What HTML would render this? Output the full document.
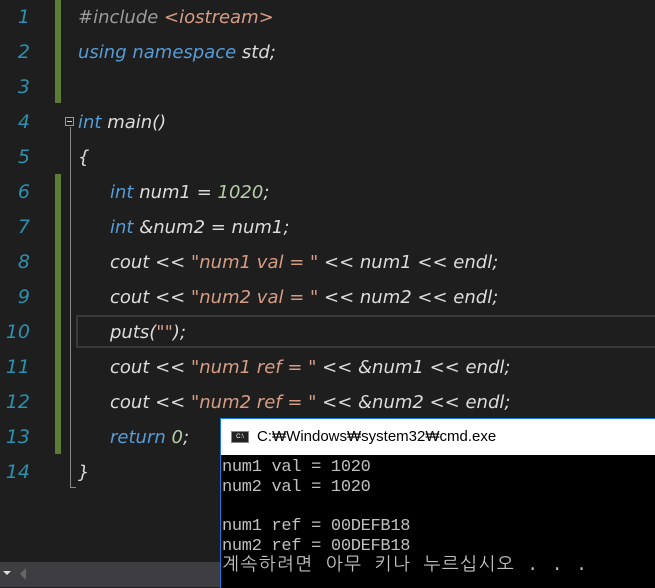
<!DOCTYPE html><html><head><meta charset="utf-8"><style>
body{margin:0;width:655px;height:587px;background:#1e1e1e;position:relative;overflow:hidden;font-family:"DejaVu Sans",sans-serif}
.ln{position:absolute;left:0;width:30px;text-align:right;color:#2b91af;font-size:19px;font-style:italic}
.c{position:absolute;left:78px;color:#dcdcdc;font-size:18px;white-space:pre;font-style:italic}
.i{padding-left:32px}
.k{color:#569cd6}.s{color:#d69d85}.n{color:#b5cea8}.p{color:#9b9b9b}
.g{position:absolute;left:55px;width:6px;background:#5a7c34}
.con{position:absolute;left:220px;top:418px;width:435px;height:169px;background:#000;border-left:1px solid #1a7ad8;border-top:1px solid #1a7ad8}
.tb{height:36px;background:#fff;font-family:"Liberation Sans",sans-serif;font-size:15px;color:#000;line-height:36px;padding-left:36px;position:relative}
.out{font-family:"Liberation Mono","NanumGothic",monospace;color:#c0c0c0;font-size:17px;line-height:19.8px;white-space:pre;padding-left:1px;padding-top:3px;letter-spacing:-0.3px}
.kr{font-size:18px;letter-spacing:1.4px}
</style></head><body>
<div class="g" style="top:0;height:103px"></div>
<div class="g" style="top:174px;height:280px"></div>
<div style="position:absolute;left:65px;top:117px;width:9px;height:9px;border:1px solid #999;box-sizing:border-box"><div style="position:absolute;left:1px;top:3px;width:5px;height:1px;background:#ccc"></div></div>
<div style="position:absolute;left:70px;top:127px;width:1px;height:360px;background:#888"></div>
<div style="position:absolute;left:70px;top:487px;width:6px;height:1px;background:#888"></div>
<div style="position:absolute;left:76px;top:315px;width:600px;height:33px;border:2px solid #3a3a3a;box-sizing:border-box"></div>
<div style="position:absolute;left:0;top:562px;width:220px;height:25px;background:#3e3e42"></div>
<div style="position:absolute;left:3px;top:571px;width:0;height:0;border-left:4px solid transparent;border-right:4px solid transparent;border-top:4px solid #ddd"></div>
<div style="position:absolute;left:20px;top:568px;width:0;height:0;border-top:6px solid transparent;border-bottom:6px solid transparent;border-right:6px solid #666"></div>
<div class="ln" style="top:6px">1</div><div class="c" style="top:7px"><span class="p">#include</span> <span class="s">&lt;iostream&gt;</span></div>
<div class="ln" style="top:41px">2</div><div class="c" style="top:42px"><span class="k">using namespace</span> std;</div>
<div class="ln" style="top:76px">3</div>
<div class="ln" style="top:111px">4</div><div class="c" style="top:112px"><span class="k">int</span> main()</div>
<div class="ln" style="top:146px">5</div><div class="c" style="top:147px">{</div>
<div class="ln" style="top:181px">6</div><div class="c i" style="top:182px"><span class="k">int</span> num1 = <span class="n">1020</span>;</div>
<div class="ln" style="top:216px">7</div><div class="c i" style="top:217px"><span class="k">int</span> &amp;num2 = num1;</div>
<div class="ln" style="top:251px">8</div><div class="c i" style="top:252px">cout &lt;&lt; <span class="s">"num1 val = "</span> &lt;&lt; num1 &lt;&lt; endl;</div>
<div class="ln" style="top:286px">9</div><div class="c i" style="top:287px">cout &lt;&lt; <span class="s">"num2 val = "</span> &lt;&lt; num2 &lt;&lt; endl;</div>
<div class="ln" style="top:321px">10</div><div class="c i" style="top:322px">puts(<span class="s">""</span>);</div>
<div class="ln" style="top:356px">11</div><div class="c i" style="top:357px">cout &lt;&lt; <span class="s">"num1 ref = "</span> &lt;&lt; &amp;num1 &lt;&lt; endl;</div>
<div class="ln" style="top:391px">12</div><div class="c i" style="top:392px">cout &lt;&lt; <span class="s">"num2 ref = "</span> &lt;&lt; &amp;num2 &lt;&lt; endl;</div>
<div class="ln" style="top:426px">13</div><div class="c i" style="top:427px"><span class="k">return</span> <span class="n">0</span>;</div>
<div class="ln" style="top:461px">14</div><div class="c" style="top:462px">}</div>
<div class="con"><div class="tb"><div style="position:absolute;left:10px;top:12px;width:18px;height:12px;background:#222;border:1px solid #888;box-sizing:border-box;color:#fff;font-size:6px;line-height:10px;text-align:center">C:\</div>C:₩Windows₩system32₩cmd.exe</div>
<div class="out">num1 val = 1020
num2 val = 1020

num1 ref = 00DEFB18
num2 ref = 00DEFB18
<span class="kr">계속하려면 아무 키나 누르십시오 . . .</span></div></div>
</body></html>
